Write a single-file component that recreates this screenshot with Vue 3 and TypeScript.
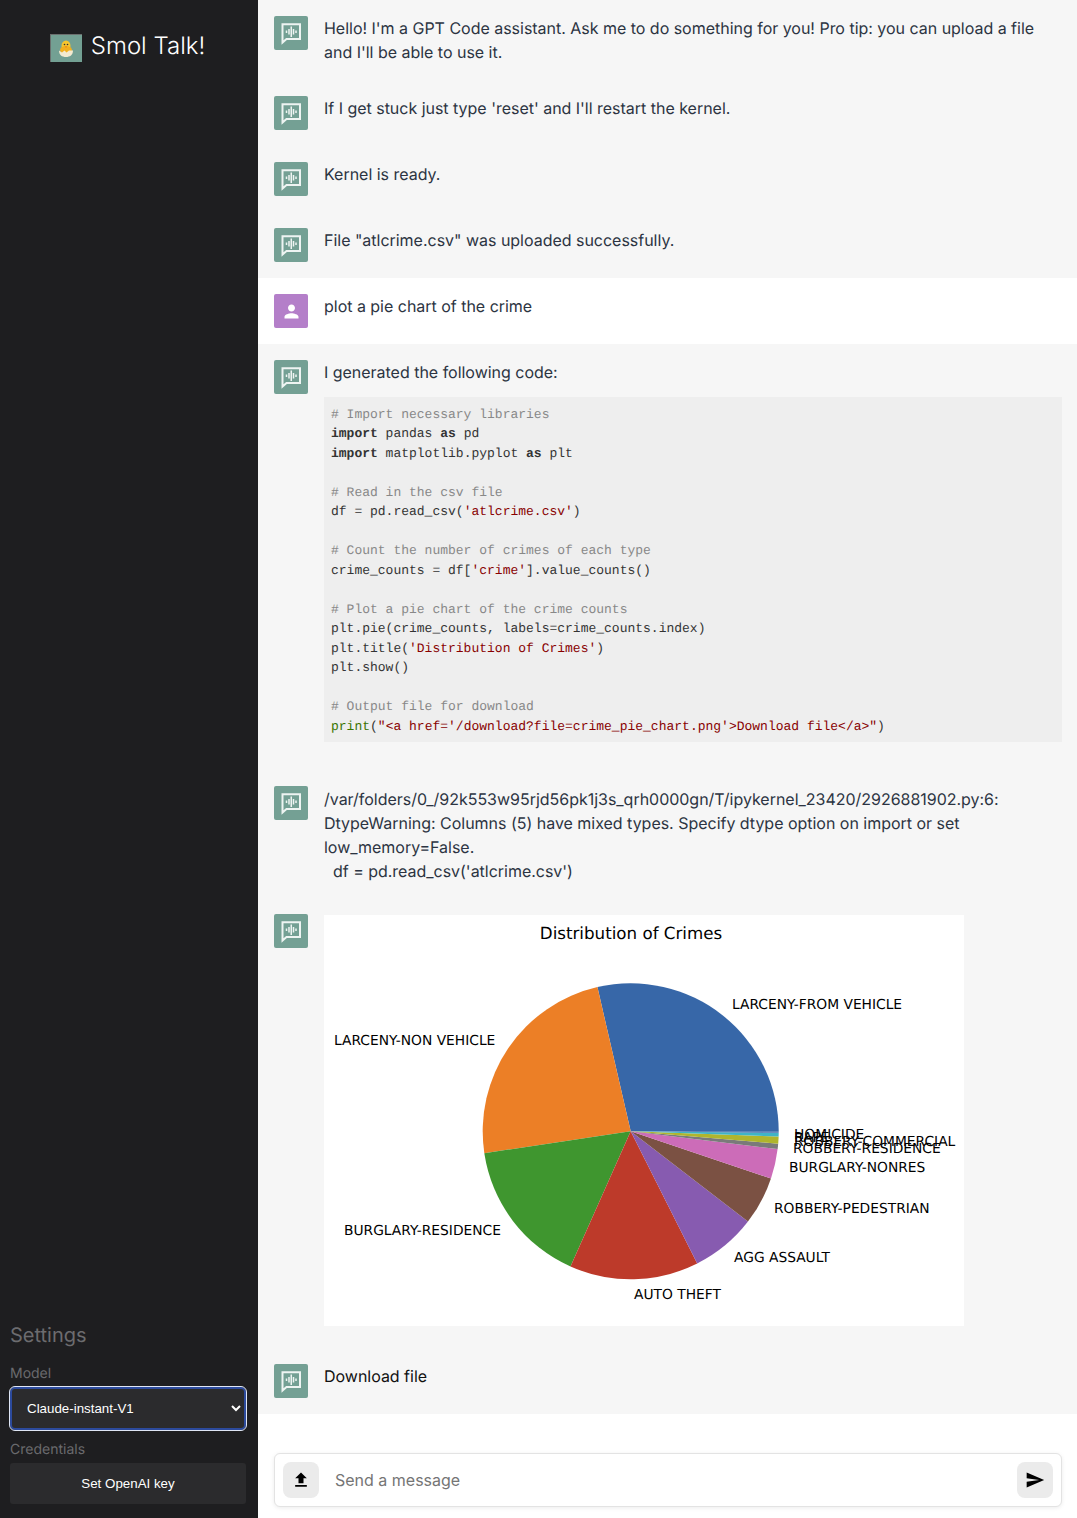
<script setup lang="ts">
interface Wedge { color: string; from: number; to: number }
interface Label { text: string; x: number; y: number }

const introMessages = [
  "Hello! I'm a GPT Code assistant. Ask me to do something for you! Pro tip: you can upload a file and I'll be able to use it.",
  "If I get stuck just type 'reset' and I'll restart the kernel.",
  'Kernel is ready.',
  'File "atlcrime.csv" was uploaded successfully.',
]

const warning = `/var/folders/0_/92k553w95rjd56pk1j3s_qrh0000gn/T/ipykernel_23420/2926881902.py:6:
DtypeWarning: Columns (5) have mixed types. Specify dtype option on import or set
low_memory=False.
  df = pd.read_csv('atlcrime.csv')`

const cx = 306.7
const cy = 216.3
const r = 148

const wedges: Wedge[] = [
  { color: '#3767a8', from: 0, to: 103 },
  { color: '#ec7f26', from: 103, to: 188.5 },
  { color: '#3f962f', from: 188.5, to: 246 },
  { color: '#bd3a2a', from: 246, to: 296.7 },
  { color: '#875bb0', from: 296.7, to: 322.4 },
  { color: '#7b5143', from: 322.4, to: 341.4 },
  { color: '#cc6cb8', from: 341.4, to: 353.1 },
  { color: '#7a7a7a', from: 353.1, to: 355.2 },
  { color: '#b0b52c', from: 355.2, to: 358 },
  { color: '#3fb4c6', from: 358, to: 359.4 },
  { color: '#3767a8', from: 359.4, to: 360 },
]

const labels: Label[] = [
  { text: 'LARCENY-FROM VEHICLE', x: 408, y: 94 },
  { text: 'LARCENY-NON VEHICLE', x: 10, y: 130 },
  { text: 'BURGLARY-RESIDENCE', x: 20, y: 320 },
  { text: 'AUTO THEFT', x: 310, y: 384 },
  { text: 'AGG ASSAULT', x: 410, y: 347 },
  { text: 'ROBBERY-PEDESTRIAN', x: 450, y: 298 },
  { text: 'BURGLARY-NONRES', x: 465, y: 257 },
  { text: 'ROBBERY-RESIDENCE', x: 469, y: 238 },
  { text: 'ROBBERY-COMMERCIAL', x: 470, y: 231 },
  { text: 'RAPE', x: 470, y: 227 },
  { text: 'HOMICIDE', x: 470, y: 224 },
]

function wedgePath(w: Wedge): string {
  const a = (w.from * Math.PI) / 180
  const b = (w.to * Math.PI) / 180
  const x1 = cx + r * Math.cos(a)
  const y1 = cy - r * Math.sin(a)
  const x2 = cx + r * Math.cos(b)
  const y2 = cy - r * Math.sin(b)
  const large = w.to - w.from > 180 ? 1 : 0
  return `M${cx} ${cy}L${x1} ${y1}A${r} ${r} 0 ${large} 0 ${x2} ${y2}Z`
}
</script>

<template>
  <div class="app">
    <aside class="sidebar">
      <div class="brand">
        <svg class="logo" width="32" height="28" viewBox="0 0 32 28">
          <rect width="32" height="28" fill="#73a093" />
          <path d="M0 0H32V1H1V28H0Z" fill="#6b6f6e" />
          <ellipse cx="16" cy="12" rx="4.5" ry="5.5" fill="#f7c52e" />
          <ellipse cx="16" cy="16" rx="6" ry="4" fill="#f2b01f" />
          <path d="M9 16.5L12 18.5L14.500 16.500L16.500 18.500L19 16.500L23 16.500C23 21 20 23 16 23C12 23 9 21 9 16.500Z" fill="#f3ead0" />
          <circle cx="14.500" cy="10.500" r="0.800" fill="#333" />
          <circle cx="17.500" cy="10.500" r="0.800" fill="#333" />
          <path d="M15 12.500H17L16 13.800Z" fill="#e8651a" />
        </svg>
        <span class="brand-name">Smol Talk!</span>
      </div>

      <div class="settings">
        <div class="settings-title">Settings</div>
        <label class="settings-label" for="model">Model</label>
        <select id="model" class="model-select">
          <option>Claude-instant-V1</option>
        </select>
        <div class="settings-label credentials">Credentials</div>
        <button class="key-button">Set OpenAI key</button>
      </div>
    </aside>

    <main class="main">
      <div class="messages">
        <div v-for="text in introMessages" :key="text" class="row">
          <span class="avatar bot">
            <svg width="34" height="34" viewBox="0 0 34 34" class="bubble">
              <path d="M8.500 8.300H26V23H12.500L8.500 26.500Z" />
              <path class="bars" d="M12.500 14.500V17M15 13V18.500M17.250 10.500V21M19.500 13V18.500M22 14.500V17" />
            </svg>
          </span>
          <div class="text">{{ text }}</div>
        </div>

        <div class="row user">
          <span class="avatar human">
            <svg width="21" height="21" viewBox="0 0 24 24" fill="#fff">
              <path d="M12 12c2.210 0 4-1.790 4-4s-1.790-4-4-4-4 1.790-4 4 1.790 4 4 4zm0 2c-2.670 0-8 1.340-8 4v2h16v-2c0-2.660-5.330-4-8-4z" />
            </svg>
          </span>
          <div class="text">plot a pie chart of the crime</div>
        </div>

        <div class="row code-row">
          <span class="avatar bot">
            <svg width="34" height="34" viewBox="0 0 34 34" class="bubble">
              <path d="M8.500 8.300H26V23H12.500L8.500 26.500Z" />
              <path class="bars" d="M12.500 14.500V17M15 13V18.500M17.250 10.500V21M19.500 13V18.500M22 14.500V17" />
            </svg>
          </span>
          <div class="text">
            <div class="code-intro">I generated the following code:</div>
            <pre class="code"><span class="c"># Import necessary libraries</span>
<b>import</b> pandas <b>as</b> pd
<b>import</b> matplotlib.pyplot <b>as</b> plt

<span class="c"># Read in the csv file</span>
df = pd.read_csv(<span class="s">'atlcrime.csv'</span>)

<span class="c"># Count the number of crimes of each type</span>
crime_counts = df[<span class="s">'crime'</span>].value_counts()

<span class="c"># Plot a pie chart of the crime counts</span>
plt.pie(crime_counts, labels=crime_counts.index)
plt.title(<span class="s">'Distribution of Crimes'</span>)
plt.show()

<span class="c"># Output file for download</span>
<span class="b">print</span>(<span class="s">"&lt;a href='/download?file=crime_pie_chart.png'&gt;Download file&lt;/a&gt;"</span>)</pre>
          </div>
        </div>

        <div class="row warning-row">
          <span class="avatar bot">
            <svg width="34" height="34" viewBox="0 0 34 34" class="bubble">
              <path d="M8.500 8.300H26V23H12.500L8.500 26.500Z" />
              <path class="bars" d="M12.500 14.500V17M15 13V18.500M17.250 10.500V21M19.500 13V18.500M22 14.500V17" />
            </svg>
          </span>
          <div class="text warning">{{ warning }}</div>
        </div>

        <div class="row chart-row">
          <span class="avatar bot">
            <svg width="34" height="34" viewBox="0 0 34 34" class="bubble">
              <path d="M8.500 8.300H26V23H12.500L8.500 26.500Z" />
              <path class="bars" d="M12.500 14.500V17M15 13V18.500M17.250 10.500V21M19.500 13V18.500M22 14.500V17" />
            </svg>
          </span>
          <svg class="chart" width="640" height="411" viewBox="0 0 640 411">
            <rect width="640" height="411" fill="#fff" />
            <text class="chart-title" x="307" y="24" text-anchor="middle">Distribution of Crimes</text>
            <path v-for="w in wedges" :key="w.from" :d="wedgePath(w)" :fill="w.color" />
            <text v-for="l in labels" :key="l.text" class="chart-label" :x="l.x" :y="l.y">{{ l.text }}</text>
          </svg>
        </div>

        <div class="row">
          <span class="avatar bot">
            <svg width="34" height="34" viewBox="0 0 34 34" class="bubble">
              <path d="M8.500 8.300H26V23H12.500L8.500 26.500Z" />
              <path class="bars" d="M12.500 14.500V17M15 13V18.500M17.250 10.500V21M19.500 13V18.500M22 14.500V17" />
            </svg>
          </span>
          <a class="text download" href="#">Download file</a>
        </div>
      </div>

      <div class="composer">
        <div class="input-box">
          <button class="icon-button" aria-label="Upload file">
            <svg width="20" height="20" viewBox="0 0 24 24"><path d="M9 16h6v-6h4l-7-7-7 7h4zm-4 2h14v2H5z" /></svg>
          </button>
          <input class="message-input" placeholder="Send a message" />
          <button class="icon-button" aria-label="Send">
            <svg width="20" height="20" viewBox="0 0 24 24"><path d="M2.010 21 23 12 2.010 3 2 10l15 2-15 2z" /></svg>
          </button>
        </div>
      </div>
    </main>
  </div>
</template>

<style scoped>
.app {
  display: flex;
  height: 1518px;
  overflow: hidden;
  font-family: Inter, "Noto Sans", sans-serif;
  text-rendering: geometricPrecision;
  background: #fff;
}

.sidebar {
  flex: 0 0 258px;
  display: flex;
  flex-direction: column;
  justify-content: space-between;
  background: #1e1e20;
  box-sizing: border-box;
  padding: 0 12px 14px 10px;
}

.brand {
  display: flex;
  align-items: center;
  justify-content: center;
  gap: 9px;
  margin-top: 30px;
  height: 30px;
  padding-right: 1px;
}

.logo {
  display: block;
  flex: none;
  margin-top: 6px;
}

.brand-name {
  color: #fff;
  font-size: 24px;
  font-weight: 300;
}

.settings {
  display: flex;
  flex-direction: column;
  align-items: stretch;
}

.settings-title {
  color: #6c6c6f;
  font-size: 20px;
  line-height: 24px;
  margin-bottom: 17px;
}

.settings-label {
  color: #6a6a6d;
  font-size: 14px;
  line-height: 20px;
}

.credentials {
  margin-top: 10px;
  margin-bottom: 3px;
}

.model-select {
  color-scheme: dark;
  height: 43px;
  margin-top: 3px;
  padding: 0 11px;
  background: #2b2b2d;
  color: #fff;
  border: 2px solid #2c4a9c;
  border-radius: 5px;
  outline: 1px solid #dfe6f5;
  font-family: "Liberation Sans", Arial, sans-serif;
  font-size: 13.333px;
}

.key-button {
  height: 41px;
  background: #2b2b2d;
  color: #fff;
  border: 0;
  border-radius: 3px;
  font-family: "Liberation Sans", Arial, sans-serif;
  font-size: 13.333px;
}

.main {
  flex: 1;
  min-width: 0;
  display: flex;
  flex-direction: column;
  background: #fff;
}

.messages {
  flex: 1;
  min-height: 0;
}

.row {
  display: flex;
  gap: 16px;
  padding: 16px 15px 16px 16px;
  background: #f6f6f6;
}

.row.user {
  background: #fff;
}

.avatar {
  flex: none;
  width: 34px;
  height: 34px;
  display: flex;
  align-items: center;
  justify-content: center;
  border-radius: 2px;
}

.avatar.bot {
  background: #74a094;
}

.avatar.human {
  background: #b47fc9;
}

.bubble path {
  fill: none;
  stroke: #eef4f2;
  stroke-width: 2;
}

.bubble .bars {
  stroke-width: 1.500;
}

.text {
  flex: 1;
  min-width: 0;
  font-size: 16px;
  line-height: 24px;
  letter-spacing: -0.02px;
  color: #2c3442;
}

.warning {
  white-space: pre-wrap;
  padding-top: 1px;
}

.warning-row {
  padding-bottom: 15px;
}

.code-intro {
  margin-bottom: 13px;
}

.code-row {
  padding-bottom: 28px;
}

.code {
  margin: 0;
  padding: 7.500px 7px 6px;
  background: #eeeeee;
  color: #333;
  font-family: "Liberation Mono", "Courier New", monospace;
  font-size: 13px;
  line-height: 19.500px;
  letter-spacing: 0;
  overflow: hidden;
}

.code .c {
  color: #888;
}

.code .s {
  color: #880000;
}

.code .b {
  color: #397300;
}

.chart-row {
  padding-bottom: 22px;
}

.chart {
  display: block;
  flex: none;
  margin-top: 1px;
}

.chart-title {
  font-family: "DejaVu Sans", sans-serif;
  font-size: 16.700px;
  fill: #000;
}

.chart-label {
  font-family: "DejaVu Sans", sans-serif;
  font-size: 13.800px;
  fill: #000;
}

.download {
  color: #111;
  text-decoration: none;
}

.composer {
  flex: none;
  padding: 0 15px 11px 16px;
}

.input-box {
  display: flex;
  align-items: center;
  gap: 15px;
  height: 54px;
  box-sizing: border-box;
  padding: 0 8px;
  background: #fff;
  border: 1px solid #e3e3e3;
  border-radius: 6px;
  box-shadow: 0 1px 4px rgba(0, 0, 0, 0.08);
}

.icon-button {
  flex: none;
  width: 36px;
  height: 36px;
  padding: 0;
  display: flex;
  align-items: center;
  justify-content: center;
  background: #ebebeb;
  border: 0;
  border-radius: 8px;
}

.message-input {
  flex: 1;
  min-width: 0;
  border: 0;
  outline: 0;
  padding: 0 0 0 1px;
  background: transparent;
  font-family: Inter, "Noto Sans", sans-serif;
  font-size: 16px;
  color: #333;
}

.message-input::placeholder {
  color: #757575;
}
</style>
